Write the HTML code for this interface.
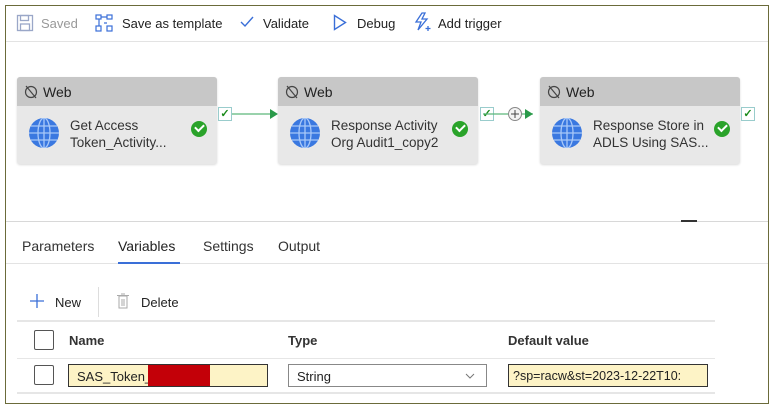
<!DOCTYPE html><html><head><style>
*{box-sizing:border-box;margin:0;padding:0}
body{width:775px;height:409px;background:#fff;font-family:"Liberation Sans",sans-serif;color:#222;position:relative;overflow:hidden}
.a{position:absolute}
.frame{left:5px;top:5px;width:764px;height:399px;border:1px solid #6b6b3a}
.tb{font-size:13px;top:16px}
.node{width:200px;height:87px;background:#e8e8e8;border-radius:3px;box-shadow:0 1px 2px rgba(0,0,0,.15)}
.nh{height:29px;background:#c7c7c7;border-radius:3px 3px 0 0;font-size:14px;padding:7px 0 0 26px;position:relative}
.nt{position:absolute;left:53px;top:40px;font-size:13.5px;line-height:17px;color:#333}
.glob{position:absolute;left:12px;top:41px}
.ok{position:absolute;width:16px;height:16px;border-radius:50%;background:#2aa32a;top:44px;left:174px}
.ok:after{content:"";position:absolute;left:4px;top:3px;width:7px;height:4px;border-left:2px solid #fff;border-bottom:2px solid #fff;transform:rotate(-45deg)}
.cb{width:14px;height:14px;border:1px solid #9cc;background:#fff;font-size:11px;color:#1a8a1a;text-align:center;line-height:12px;font-weight:bold}
.chk{width:20px;height:20px;border:1px solid #555;border-radius:2px;background:#fff}
.in{height:23px;border:1px solid #333;font-size:13px;padding:4px 0 0 8px}
</style></head><body>
<div class="a frame"></div>
<svg class="a" style="left:16px;top:14px" width="18" height="18" viewBox="0 0 18 18" fill="none" stroke="#9aa7c8" stroke-width="1.3"><rect x="1.5" y="1.5" width="15" height="15"/><rect x="4.5" y="1.5" width="8" height="5"/><rect x="4.5" y="10" width="9" height="6.5"/></svg>
<div class="a tb" style="left:41px;color:#999">Saved</div>
<svg class="a" style="left:95px;top:14px" width="18" height="18" viewBox="0 0 18 18" fill="none" stroke="#3a6fd8" stroke-width="1.2"><rect x="1" y="1" width="5" height="4"/><rect x="12" y="1" width="5" height="4"/><rect x="1" y="12" width="5" height="5"/><rect x="12" y="12" width="5" height="5"/><path d="M6 3h6M4 5v7M9 9h3"/></svg>
<div class="a tb" style="left:122px">Save as template</div>
<svg class="a" style="left:240px;top:16px" width="14" height="12" viewBox="0 0 14 12" fill="none" stroke="#3a6fd8" stroke-width="1.4"><path d="M1 6l4 4 8-9"/></svg>
<div class="a tb" style="left:263px">Validate</div>
<svg class="a" style="left:333px;top:14px" width="14" height="17" viewBox="0 0 14 17" fill="none" stroke="#3a6fd8" stroke-width="1.4"><path d="M1.5 1.5v14l11-7z"/></svg>
<div class="a tb" style="left:357px">Debug</div>
<svg class="a" style="left:414px;top:12px" width="18" height="20" viewBox="0 0 18 20" fill="none" stroke="#3a6fd8" stroke-width="1.3"><path d="M8 1l-6 9h5l-3 8 9-11h-5l3-6z"/><path d="M14 14v5M11.5 16.5h5"/></svg>
<div class="a tb" style="left:438px">Add trigger</div>
<div class="a" style="left:6px;top:41px;width:762px;height:1px;background:#e3e3e3"></div>

<!-- nodes -->
<div class="a node" style="left:17px;top:77px"><div class="nh">Web</div></div>
<div class="a node" style="left:278px;top:77px"><div class="nh">Web</div></div>
<div class="a node" style="left:540px;top:77px"><div class="nh">Web</div></div>
<svg width="0" height="0" style="position:absolute"><defs>
<g id="dis"><circle cx="7" cy="7" r="5.5" fill="none" stroke="#444" stroke-width="1.2"/><path d="M2 1l10 12" stroke="#444" stroke-width="1.2"/></g>
<g id="gl"><circle cx="15" cy="15" r="15" fill="#3a78e0"/><g fill="none" stroke="#a8c8f8" stroke-width="1.3"><ellipse cx="15" cy="15" rx="6" ry="15"/><path d="M15 0v30M0 15h30M2 8h26M2 22h26"/></g></g></defs></svg>
<svg class="a" style="left:24px;top:85px" width="14" height="14"><use href="#dis"/></svg>
<svg class="a" style="left:285px;top:85px" width="14" height="14"><use href="#dis"/></svg>
<svg class="a" style="left:547px;top:85px" width="14" height="14"><use href="#dis"/></svg>
<div class="a" style="left:17px;top:77px;width:200px;height:87px"><svg class="glob" width="30" height="30"><use href="#gl"/></svg><div class="nt">Get Access<br>Token_Activity...</div><div class="ok"></div></div>
<div class="a" style="left:278px;top:77px;width:200px;height:87px"><svg class="glob" width="30" height="30"><use href="#gl"/></svg><div class="nt">Response Activity<br>Org Audit1_copy2</div><div class="ok"></div></div>
<div class="a" style="left:540px;top:77px;width:200px;height:87px"><svg class="glob" width="30" height="30"><use href="#gl"/></svg><div class="nt">Response Store in<br>ADLS Using SAS...</div><div class="ok"></div></div>
<div class="a cb" style="left:218px;top:107px">✓</div>
<div class="a cb" style="left:480px;top:107px">✓</div>
<div class="a cb" style="left:741px;top:107px">✓</div>
<svg class="a" style="left:232px;top:105px" width="310" height="20"><path d="M0 9h38M251 9h50" stroke="#5cb87a" stroke-width="1.3"/><path d="M38 4l8 5-8 5z" fill="#2a9a4a"/><path d="M293 4l8 5-8 5z" fill="#2a9a4a"/><circle cx="283" cy="9" r="6.5" fill="#f3f3f3" stroke="#888"/><path d="M279 9h8M283 5v8" stroke="#444"/></svg>

<div class="a" style="left:6px;top:221px;width:762px;height:1px;background:#d8d8d8"></div>
<div class="a" style="left:681px;top:220px;width:16px;height:2px;background:#333"></div>

<div class="a" style="left:22px;top:238px;font-size:14px;color:#333">Parameters</div>
<div class="a" style="left:118px;top:238px;font-size:14px;color:#222">Variables</div>
<div class="a" style="left:203px;top:238px;font-size:14px;color:#333">Settings</div>
<div class="a" style="left:278px;top:238px;font-size:14px;color:#333">Output</div>
<div class="a" style="left:6px;top:263px;width:762px;height:1px;background:#e3e3e3"></div>
<div class="a" style="left:118px;top:262px;width:62px;height:2px;background:#3a6fd8"></div>

<svg class="a" style="left:29px;top:293px" width="16" height="16"><path d="M8 1v14M1 8h14" stroke="#3a6fd8" stroke-width="1.3"/></svg>
<div class="a" style="left:55px;top:295px;font-size:13px">New</div>
<div class="a" style="left:98px;top:287px;width:1px;height:30px;background:#ddd"></div>
<svg class="a" style="left:117px;top:293px" width="12" height="16" fill="none" stroke="#aaa"><rect x="2" y="3" width="8" height="12"/><path d="M0 2.5h12M4 1h4M5 6v7M7 6v7"/></svg>
<div class="a" style="left:141px;top:295px;font-size:13px">Delete</div>

<div class="a" style="left:17px;top:320px;width:698px;height:2px;background:#e6e6e6"></div>
<div class="a chk" style="left:34px;top:330px"></div>
<div class="a" style="left:69px;top:333px;font-size:13px;font-weight:bold;color:#333">Name</div>
<div class="a" style="left:288px;top:333px;font-size:13px;font-weight:bold;color:#333">Type</div>
<div class="a" style="left:508px;top:333px;font-size:13px;font-weight:bold;color:#333">Default value</div>
<div class="a" style="left:17px;top:358px;width:698px;height:1px;background:#e6e6e6"></div>
<div class="a chk" style="left:34px;top:365px"></div>
<div class="a in" style="left:68px;top:364px;width:200px;background:#fdf3c6">SAS_Token_</div>
<div class="a" style="left:148px;top:365px;width:62px;height:21px;background:#c30008"></div>
<div class="a in" style="left:288px;top:364px;width:199px;border-color:#888;background:#fff">String</div>
<svg class="a" style="left:465px;top:373px" width="10" height="6"><path d="M1 1l4 4 4-4" fill="none" stroke="#777"/></svg>
<div class="a in" style="left:508px;top:364px;width:200px;background:#fdf3c6;padding-left:4px;font-size:12.5px;white-space:nowrap;overflow:hidden">?sp=racw&amp;st=2023-12-22T10:</div>
<div class="a" style="left:17px;top:392px;width:698px;height:2px;background:#e6e6e6"></div>
</body></html>
